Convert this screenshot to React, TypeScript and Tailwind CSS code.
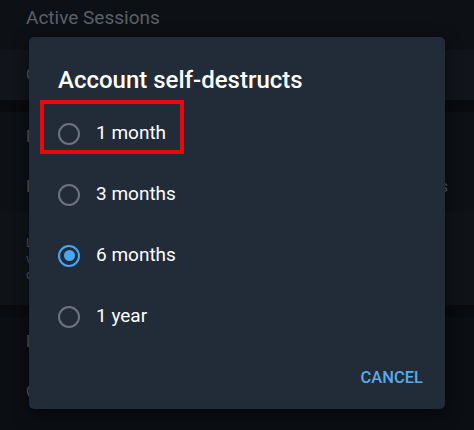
export default function App() {
  const options = [
    { label: "1 month", checked: false },
    { label: "3 months", checked: false },
    { label: "6 months", checked: true },
    { label: "1 year", checked: false },
  ];

  return (
    <div
      className="relative w-[474px] h-[430px] overflow-hidden bg-[#0b0e13]"
      style={{ fontFamily: "Roboto, 'Liberation Sans', sans-serif" }}
    >
      {/* dimmed settings list behind the dialog */}
      <div className="flex flex-col text-[#5b6168]">
        <div className="h-[50px] pt-[5px] px-[26px] bg-[#0d1015] text-[19px] leading-[26px]">Active Sessions</div>
        <div className="h-[50px] flex items-center px-[26px] bg-[#11151b] text-[16px]">Change</div>
        <div className="h-[12px] bg-[#090b0f]" />
        <div className="h-[50px] flex items-center px-[26px] bg-[#0d1015] text-[16px]">Privacy</div>
        <div className="h-[50px] flex items-center justify-between px-[26px] bg-[#0d1015] text-[16px]">
          <span>If away</span>
          <span>months</span>
        </div>
        <div className="h-[93px] flex flex-col justify-center px-[26px] bg-[#0f1318] text-[12px] leading-[16px]">
          <span>Long text</span>
          <span>vanish</span>
          <span>contacts</span>
        </div>
        <div className="h-[12px] bg-[#090b0f]" />
        <div className="h-[50px] flex items-center px-[26px] bg-[#0b0e13] text-[16px]">Data</div>
        <div className="h-[50px] flex items-center px-[26px] bg-[#0b0e13] text-[16px]">Clear</div>
      </div>

      {/* dialog */}
      <div className="absolute left-[29px] top-[37px] w-[416px] h-[372px] rounded-[5px] bg-[#222b38] shadow-[0_4px_16px_rgba(0,0,0,0.6)] flex flex-col">
        <div className="pt-[29px] px-[29px] text-[24px] leading-[28px] font-medium text-white">
          Account self-destructs
        </div>
        <div className="relative mt-[9px] flex flex-col">
          {options.map((o) => (
            <div key={o.label} className="h-[61px] flex items-center gap-[16px] px-[29px]">
              {o.checked ? (
                <span className="w-[22px] h-[22px] rounded-full border-[2.5px] border-[#46a8f0] flex items-center justify-center">
                  <span className="w-[11px] h-[11px] rounded-full bg-[#46a8f0]" />
                </span>
              ) : (
                <span className="w-[22px] h-[22px] rounded-full border-[2px] border-[#6c747e]" />
              )}
              <span className="text-[19px] text-white">{o.label}</span>
            </div>
          ))}
          <div className="absolute left-[11px] top-[-3px] w-[144px] h-[54px] border-[4px] border-[#e8070b]" />
        </div>
        <div className="mt-[13px] h-[36px] flex items-center justify-end pr-[22px]">
          <span className="text-[16.5px] font-medium text-[#5aaae8]">CANCEL</span>
        </div>
      </div>
    </div>
  );
}
